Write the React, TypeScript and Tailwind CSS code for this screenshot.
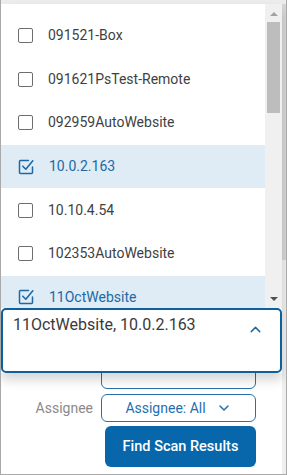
import { ChevronDown, ChevronUp } from "lucide-react";

const sites = [
  { name: "091521-Box", checked: false },
  { name: "091621PsTest-Remote", checked: false },
  { name: "092959AutoWebsite", checked: false },
  { name: "10.0.2.163", checked: true },
  { name: "10.10.4.54", checked: false },
  { name: "102353AutoWebsite", checked: false },
  { name: "11OctWebsite", checked: true },
];

function CheckedBox() {
  return (
    <svg width="16" height="16" viewBox="0 0 16 16" fill="none" className="shrink-0">
      <path
        d="M10.5 1.5H2.5a1 1 0 0 0-1 1v11a1 1 0 0 0 1 1h11a1 1 0 0 0 1-1V8"
        stroke="#1b6aa5"
        strokeWidth="1.5"
        strokeLinecap="round"
      />
      <path
        d="M4.8 7.2 7.8 10.2 14.8 1.8"
        stroke="#1b6aa5"
        strokeWidth="1.6"
        strokeLinecap="round"
        strokeLinejoin="round"
      />
    </svg>
  );
}

function SiteRow({ name, checked }: { name: string; checked: boolean }) {
  return (
    <div
      className={`flex h-[43.6px] shrink-0 items-center gap-[15px] pl-[17px] ${
        checked ? "bg-[#dfebf5] text-[#1b6aa5]" : "text-[#3f3f3f]"
      }`}
    >
      {checked ? (
        <CheckedBox />
      ) : (
        <span className="h-[15px] w-[15px] shrink-0 rounded-[2px] border-[1.5px] border-[#6e6e6e]" />
      )}
      <span className="text-[14px]">{name}</span>
    </div>
  );
}

function ListScrollbar() {
  return (
    <div className="flex w-[17px] shrink-0 flex-col items-center bg-[#f0f0f0]">
      <div className="mt-[8px] h-0 w-0 border-x-[4px] border-b-[4px] border-x-transparent border-b-[#a3a3a3]" />
      <div className="mt-[6px] h-[91px] w-[13px] bg-[#bdbdbd]" />
      <div className="mt-auto mb-[7px] h-0 w-0 border-x-[4px] border-t-[4px] border-x-transparent border-t-[#505050]" />
    </div>
  );
}

export default function App() {
  return (
    <div
      className="flex h-[475px] w-[287px] flex-col overflow-hidden border-x border-b border-[#a9a9a9] bg-white"
      style={{ fontFamily: "Roboto, 'Liberation Sans', sans-serif" }}
    >
      <div className="h-[4px] shrink-0 bg-[#ececec]" />
      <div className="flex min-h-0 flex-1">
        <div className="relative flex flex-1 flex-col">
          <div className="mt-auto flex flex-col gap-[5px] pb-[7px]">
            <div className="flex items-center gap-[8px]">
              <span className="w-[92px]" />
              <div className="h-[28px] w-[155px] rounded-[6px] border border-[#2a6fa8]" />
            </div>
            <div className="flex items-center gap-[8px]">
              <span className="w-[92px] text-right text-[14px] text-[#8a8a8a]">Assignee</span>
              <button className="flex h-[28px] w-[155px] items-center justify-center gap-[10px] rounded-[6px] border border-[#2a6fa8] text-[14px] text-[#1f6fb0]">
                Assignee: All
                <ChevronDown size={16} strokeWidth={2.2} />
              </button>
            </div>
            <button className="ml-[104px] mt-[-1px] h-[41px] w-[151px] rounded-[6px] bg-[#0767aa] text-[14.5px] font-medium text-white">
              Find Scan Results
            </button>
          </div>

          <div className="absolute inset-x-0 top-0 flex flex-col bg-white shadow-[0_7px_10px_rgba(0,0,0,0.16)]">
            <div className="flex h-[304px]">
              <div className="flex flex-1 flex-col overflow-hidden pt-[10px]">
                {sites.map((s) => (
                  <SiteRow key={s.name} name={s.name} checked={s.checked} />
                ))}
              </div>
              <ListScrollbar />
            </div>
            <div className="flex h-[65px] items-start justify-between rounded-[5px] border-2 border-[#0f5f9c] bg-white pl-[10px] pr-[16px] pt-[3px]">
              <span className="text-[16px] leading-[24px] text-[#3a3a3a]">11OctWebsite, 10.0.2.163</span>
              <ChevronUp size={17} strokeWidth={2} className="mt-[8px] text-[#1b6aa5]" />
            </div>
          </div>
        </div>
        <div className="flex w-[4px] shrink-0 flex-col bg-[#efefef]">
          <div className="h-[256px] bg-[#d6d6d6]" />
        </div>
      </div>
    </div>
  );
}
